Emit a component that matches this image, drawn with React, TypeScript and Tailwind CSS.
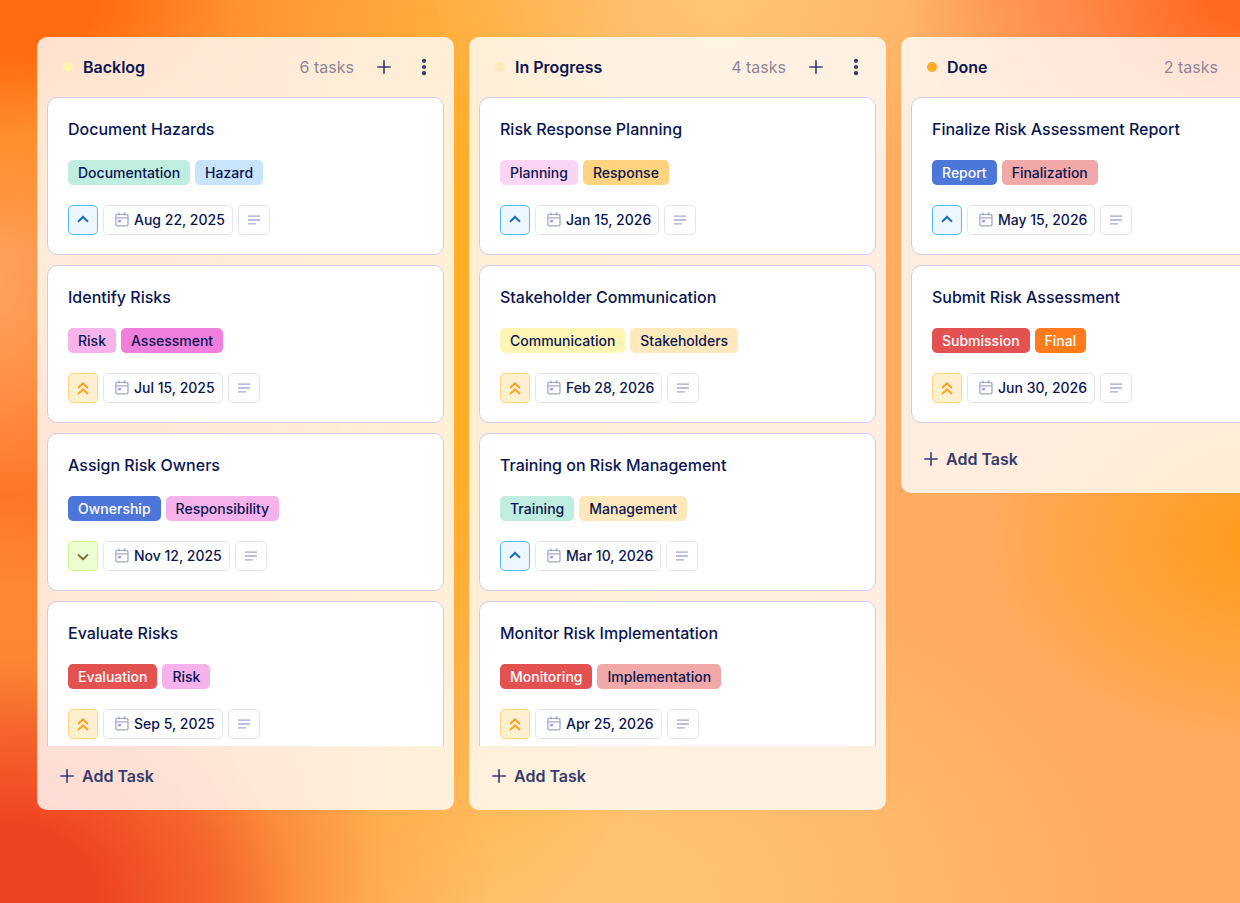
import { FC } from "react";
import clsx from "clsx";

type Priority = "high" | "highest" | "low";

type Tag = { label: string; className: string };

type Task = {
  title: string;
  tags: Tag[];
  priority: Priority;
  date: string;
};

type Column = {
  title: string;
  count: number;
  dot: string;
  tasks: Task[];
};

const navy = "text-[#0a1551]";
const MINT = `bg-[#bfeee0] ${navy}`;
const SKY = `bg-[#c8e4fc] ${navy}`;
const PINK = `bg-[#f6b2ea] ${navy}`;
const MAGENTA = `bg-[#f07edb] ${navy}`;
const BLUSH = `bg-[#fad5f5] ${navy}`;
const BLUE = "bg-[#4c76d9] text-white";
const RED = "bg-[#e45151] text-white";
const ORANGE = "bg-[#ff7b1c] text-white";
const SALMON = `bg-[#f1a8a8] ${navy}`;
const AMBER = `bg-[#ffd37f] ${navy}`;
const YELLOW = `bg-[#fff6b5] ${navy}`;
const CREAM = `bg-[#ffe8bc] ${navy}`;

const columns: Column[] = [
  {
    title: "Backlog",
    count: 6,
    dot: "bg-[#fff4b0]",
    tasks: [
      {
        title: "Document Hazards",
        tags: [
          { label: "Documentation", className: MINT },
          { label: "Hazard", className: SKY },
        ],
        priority: "high",
        date: "Aug 22, 2025",
      },
      {
        title: "Identify Risks",
        tags: [
          { label: "Risk", className: PINK },
          { label: "Assessment", className: MAGENTA },
        ],
        priority: "highest",
        date: "Jul 15, 2025",
      },
      {
        title: "Assign Risk Owners",
        tags: [
          { label: "Ownership", className: BLUE },
          { label: "Responsibility", className: PINK },
        ],
        priority: "low",
        date: "Nov 12, 2025",
      },
      {
        title: "Evaluate Risks",
        tags: [
          { label: "Evaluation", className: RED },
          { label: "Risk", className: PINK },
        ],
        priority: "highest",
        date: "Sep 5, 2025",
      },
    ],
  },
  {
    title: "In Progress",
    count: 4,
    dot: "bg-[#ffe8bc]",
    tasks: [
      {
        title: "Risk Response Planning",
        tags: [
          { label: "Planning", className: BLUSH },
          { label: "Response", className: AMBER },
        ],
        priority: "high",
        date: "Jan 15, 2026",
      },
      {
        title: "Stakeholder Communication",
        tags: [
          { label: "Communication", className: YELLOW },
          { label: "Stakeholders", className: CREAM },
        ],
        priority: "highest",
        date: "Feb 28, 2026",
      },
      {
        title: "Training on Risk Management",
        tags: [
          { label: "Training", className: MINT },
          { label: "Management", className: CREAM },
        ],
        priority: "high",
        date: "Mar 10, 2026",
      },
      {
        title: "Monitor Risk Implementation",
        tags: [
          { label: "Monitoring", className: RED },
          { label: "Implementation", className: SALMON },
        ],
        priority: "highest",
        date: "Apr 25, 2026",
      },
    ],
  },
  {
    title: "Done",
    count: 2,
    dot: "bg-[#ffac26]",
    tasks: [
      {
        title: "Finalize Risk Assessment Report",
        tags: [
          { label: "Report", className: BLUE },
          { label: "Finalization", className: SALMON },
        ],
        priority: "high",
        date: "May 15, 2026",
      },
      {
        title: "Submit Risk Assessment",
        tags: [
          { label: "Submission", className: RED },
          { label: "Final", className: ORANGE },
        ],
        priority: "highest",
        date: "Jun 30, 2026",
      },
    ],
  },
];

const priorityStyles: Record<Priority, { box: string; path: string }> = {
  high: {
    box: "border-[#4dbcff] bg-[#edf7ff] text-[#1f6bd0]",
    path: "M4 10.8 9 6l5 4.8",
  },
  highest: {
    box: "border-[#ffd37f] bg-[#fff1d0] text-[#ff9f22]",
    path: "M4 9l5-4.7L14 9M4 15l5-4.7 5 4.7",
  },
  low: {
    box: "border-[#cdf78a] bg-[#ebffd0] text-[#857647]",
    path: "M4 7.5l5 4.8 5-4.8",
  },
};

const PlusIcon: FC = () => (
  <svg width="14" height="14" viewBox="0 0 14 14" aria-hidden="true">
    <path
      d="M7 .8v12.4M.8 7h12.4"
      stroke="currentColor"
      strokeWidth="1.6"
      strokeLinecap="round"
    />
  </svg>
);

const CalendarIcon: FC = () => (
  <svg
    width="14"
    height="17"
    viewBox="0 0 14 17"
    fill="none"
    stroke="#a3aad0"
    strokeWidth="1.3"
    aria-hidden="true"
  >
    <rect x=".8" y="2.3" width="12.2" height="11.6" rx="1.5" />
    <path d="M.8 5.8H13M4 .4v3.2M9.9 .4v3.2" />
    <rect x="3" y="7.8" width="3" height="2.6" fill="#a3aad0" stroke="none" />
  </svg>
);

const TaskCard: FC<{ task: Task }> = ({ task }) => {
  const priority = priorityStyles[task.priority];

  return (
    <li className="shrink-0 rounded-[10px] border border-[#c8ceed] bg-white px-5 py-[19px]">
      <h3 className="text-base font-medium text-[#0a1551]">{task.title}</h3>
      <ul className="mt-[19px] flex gap-[5px]">
        {task.tags.map((tag) => (
          <li
            key={tag.label}
            className={clsx(
              "rounded-[5px] px-[10px] text-sm leading-[25px] font-medium",
              tag.className,
            )}
          >
            {tag.label}
          </li>
        ))}
      </ul>
      <div className="mt-5 flex gap-[5px]">
        <button
          type="button"
          aria-label={`Priority: ${task.priority}`}
          className={clsx(
            "flex size-[30px] items-center justify-center rounded-[5px] border",
            priority.box,
          )}
        >
          <svg
            width="18"
            height="18"
            viewBox="0 0 18 18"
            fill="none"
            aria-hidden="true"
          >
            <path d={priority.path} stroke="currentColor" strokeWidth="2" />
          </svg>
        </button>
        <button
          type="button"
          className="flex h-[30px] items-center gap-[5px] rounded-[5px] border border-[#e3e5f5] pr-[7px] pl-[11px] text-sm font-medium text-[#0a1551]"
        >
          <CalendarIcon />
          {task.date}
        </button>
        <button
          type="button"
          aria-label="Show description"
          className="flex h-[30px] w-8 items-center justify-center rounded-[5px] border border-[#e3e5f5]"
        >
          <svg width="12" height="10" viewBox="0 0 12 10" aria-hidden="true">
            <path
              d="M.5 1.2h11M.5 5h11M.5 8.8h7"
              stroke="#a3aad0"
              strokeWidth="1.3"
              strokeLinecap="round"
            />
          </svg>
        </button>
      </div>
    </li>
  );
};

const BoardColumn: FC<{ column: Column }> = ({ column }) => (
  <section className="flex max-h-full w-[417px] shrink-0 flex-col rounded-[10px] bg-white/80 px-[10px]">
    <header className="flex h-[60px] shrink-0 items-center pr-3 pl-4 text-base">
      <span className={clsx("size-[10px] rounded-full", column.dot)} />
      <h2 className="ml-[10px] font-semibold text-[#0a1551]">{column.title}</h2>
      <span className="ml-auto text-[#8d8698]">{column.count} tasks</span>
      <button
        type="button"
        aria-label={`Add task to ${column.title}`}
        className="ml-[23px] text-[#343c6a]"
      >
        <PlusIcon />
      </button>
      <button
        type="button"
        aria-label={`${column.title} options`}
        className="ml-[25px] flex w-[16px] justify-center text-[#343c6a]"
      >
        <svg
          width="6"
          height="18"
          viewBox="0 0 6 18"
          fill="currentColor"
          aria-hidden="true"
        >
          <circle cx="3" cy="2.8" r="2.1" />
          <circle cx="3" cy="9" r="2.1" />
          <circle cx="3" cy="15.2" r="2.1" />
        </svg>
      </button>
    </header>
    <ul className="flex min-h-0 flex-col gap-[10px] overflow-y-auto pb-[6px] [scrollbar-width:none]">
      {column.tasks.map((task) => (
        <TaskCard key={task.title} task={task} />
      ))}
    </ul>
    <footer className="flex h-16 shrink-0 items-center px-[13px] pb-1">
      <button
        type="button"
        className="flex items-center gap-2 text-base font-semibold text-[#343c6a]"
      >
        <PlusIcon />
        Add Task
      </button>
    </footer>
  </section>
);

// Soft colour fields of the wallpaper, front to back.
const wallpaper = clsx(
  "bg-[#ffab62]",
  "bg-[radial-gradient(ellipse_40%_45%_at_0%_100%,#ef4423_20%,#f5672b_44%,rgb(251_138_53/0.8)_60%,rgb(255_160_62/0.45)_78%,transparent_100%),radial-gradient(ellipse_36%_28%_at_0%_0%,#ff6c10_22%,rgb(255_140_34/0.75)_55%,transparent_100%),radial-gradient(ellipse_9%_24%_at_0%_31%,#ffa25a_0%,transparent_100%),radial-gradient(ellipse_34%_75%_at_0%_62%,#ff7528_10%,transparent_100%),radial-gradient(ellipse_27%_26%_at_100%_0%,#ff6a22_10%,rgb(255_124_60/0.7)_50%,transparent_100%),radial-gradient(ellipse_24%_24%_at_102%_60%,#ff9d1f_10%,transparent_100%),radial-gradient(ellipse_24%_22%_at_58%_0%,#ffc472_10%,transparent_100%),radial-gradient(ellipse_22%_72%_at_37%_35%,#ffae28_20%,transparent_100%),radial-gradient(ellipse_44%_40%_at_48%_100%,#ffc370_20%,transparent_100%)]",
);

export default function App() {
  return (
    <main
      className={clsx(
        "flex h-screen items-start gap-[15px] overflow-hidden px-[37px] pt-[37px] pb-[93px] font-['Inter','Liberation_Sans',sans-serif]",
        wallpaper,
      )}
    >
      {columns.map((column) => (
        <BoardColumn key={column.title} column={column} />
      ))}
    </main>
  );
}
